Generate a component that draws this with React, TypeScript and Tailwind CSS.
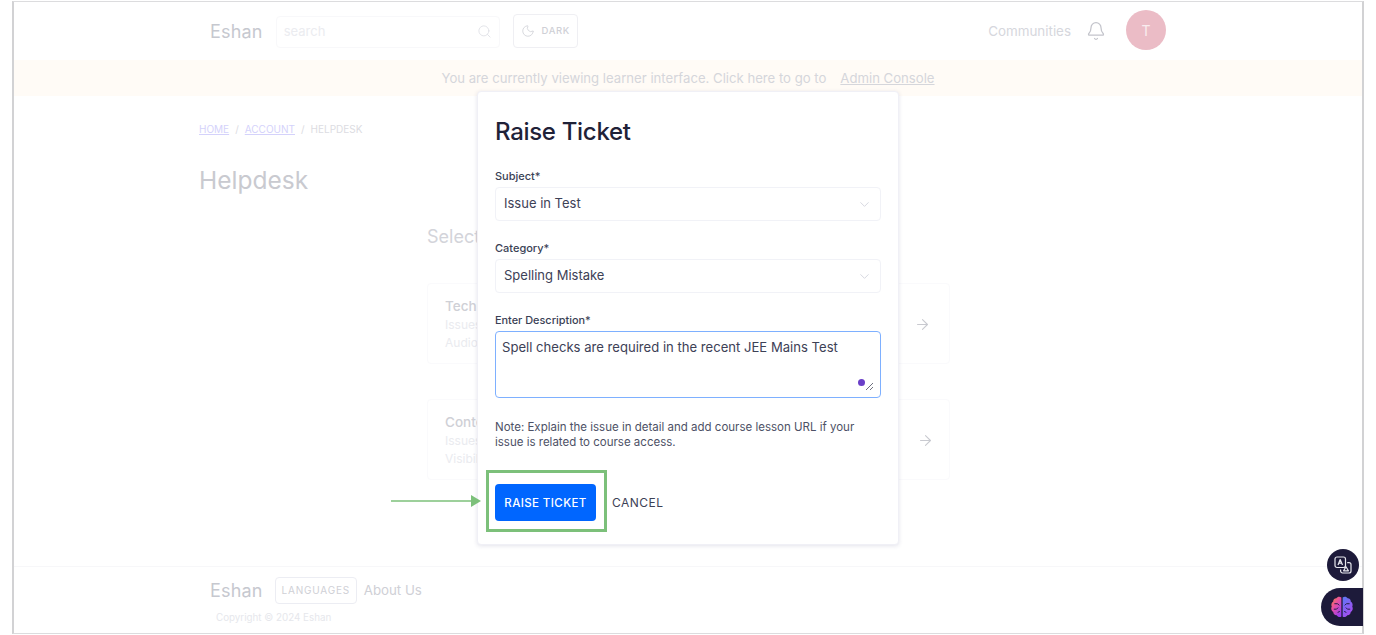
import { ArrowRight, Bell, ChevronDown, Moon, Search } from "lucide-react";

function Logo({ className }: { className?: string }) {
  return <span className={`text-[18px] leading-none text-[#c6c8cf] tracking-[0.2px] ${className ?? ""}`}>Eshan</span>;
}

function TopicCard({ title, line1, line2, arrowClass }: { title: string; line1: string; line2: string; arrowClass: string }) {
  return (
    <div className="h-[81px] w-[523px] rounded border border-[#fafafc] pl-[17px] pt-[14px] flex justify-between">
      <div>
        <div className="text-[13.5px] leading-[17px] font-medium text-[#cfd0d6]">{title}</div>
        <div className="text-[12px] leading-[18px] mt-[1px] text-[#eaebef]">{line1}</div>
        <div className="text-[12px] leading-[18px] text-[#eaebef]">{line2}</div>
      </div>
      <ArrowRight className={arrowClass} size={17} strokeWidth={1.5} color="#c9cad0" />
    </div>
  );
}

function SelectField({ label, value, fieldClass }: { label: string; value: string; fieldClass: string }) {
  return (
    <div className={fieldClass}>
      <div className="text-[11px] leading-[14px] font-medium text-[#3a3f55]">{label}</div>
      <div className="mt-[4px] h-[34px] rounded border border-[#f1f2f7] flex items-center justify-between pl-[8px] pr-[8px]">
        <span className="text-[13px] text-[#3d4156]">{value}</span>
        <ChevronDown size={15} strokeWidth={1.5} color="#d3d5de" />
      </div>
    </div>
  );
}

function TranslateIcon() {
  return (
    <svg width="20" height="20" viewBox="0 0 20 20" fill="none" stroke="#e8e8ee" strokeWidth="1.2" strokeLinejoin="round">
      <rect x="2" y="2" width="10.5" height="10.5" rx="2" />
      <path d="M5 10l2.2-5.5L9.5 10M5.9 8.2h2.7" />
      <path d="M14.2 7.6h1.8a2 2 0 0 1 2 2V16a2 2 0 0 1-2 2H9.6a2 2 0 0 1-2-2v-1.6" />
      <path d="M10.6 15.8l2.4-4 2.4 4z" />
    </svg>
  );
}

function BrainIcon() {
  return (
    <svg width="24" height="24" viewBox="0 0 22 22" fill="none">
      <defs>
        <linearGradient id="brainL" x1="0" y1="0" x2="0.7" y2="1">
          <stop offset="0" stopColor="#f58a3c" />
          <stop offset="0.45" stopColor="#e84fa0" />
          <stop offset="1" stopColor="#9a3df0" />
        </linearGradient>
        <linearGradient id="brainR" x1="0" y1="0" x2="0.6" y2="1">
          <stop offset="0" stopColor="#5a7bf5" />
          <stop offset="1" stopColor="#a84bf0" />
        </linearGradient>
      </defs>
      <path d="M10.4 2.2C8.8 1 6.6 1.5 5.8 3 4 3 2.8 4.4 3 6 1.4 7 .8 9 1.6 10.6.6 12.4 1.2 14.6 3 15.6c0 1.8 1.4 3.2 3.2 3 .8 1.6 3 2.2 4.2 1z" fill="url(#brainL)" />
      <path d="M11.6 2.2c1.6-1.2 3.8-.7 4.6.8 1.8 0 3 1.4 2.8 3 1.6 1 2.2 3 1.4 4.6 1 1.8.4 4-1.4 5 0 1.8-1.4 3.2-3.2 3-.8 1.6-3 2.2-4.2 1z" fill="url(#brainR)" />
      <path d="M4 8h3l1.500 1.500M3.500 13H6l1.500-1.500M7 16l2-1M18 8h-3l-1.500 1.500M18.500 13H16l-1.500-1.500M15 16l-2-1" stroke="#241f47" strokeWidth="0.9" />
    </svg>
  );
}

export default function App() {
  return (
    <div className="relative w-[1376px] h-[635px] overflow-hidden bg-white font-['Inter','Noto_Sans',sans-serif]">
      <div className="ml-[12px] mt-[1px] w-[1352px] h-[633px] border-x-2 border-y border-x-[#d2d2d4] border-y-[#dcdcde] flex flex-col">
        <header className="h-[58px] shrink-0 flex items-center pl-[196px] pr-[196px] pb-[2px]">
          <Logo className="mt-[4px]" />
          <div className="ml-[13px] mt-[3px] w-[224px] h-[32px] rounded border border-[#f8f8fa] flex items-center justify-between pl-[7px] pr-[7px]">
            <span className="text-[13px] text-[#ebecf0]">search</span>
            <Search size={15} strokeWidth={1.4} color="#dfe0e6" />
          </div>
          <div className="ml-[13px] mt-[2px] w-[65px] h-[34px] rounded border border-[#efeff3] flex items-center justify-center gap-[7px]">
            <Moon size={14} strokeWidth={1.4} color="#cfd0d6" />
            <span className="text-[9.5px] font-medium tracking-[0.6px] text-[#cfd0d6]">DARK</span>
          </div>
          <span className="ml-auto mt-[2px] text-[13.4px] text-[#d6d7dd]">Communities</span>
          <Bell className="ml-[15px] mt-[2px]" size={20} strokeWidth={1.5} color="#c3c4cb" />
          <div className="ml-[20px] w-[40px] h-[40px] rounded-full bg-[#ebbcc6] flex items-center justify-center text-[14px] text-[#f9ecef]">T</div>
        </header>

        <div className="h-[36px] shrink-0 bg-[#fffbf6] pt-[2px] flex items-center justify-center gap-[14px] text-[13.15px] text-[#d5d6db]">
          <span>You are currently viewing learner interface. Click here to go to</span>
          <span className="underline">Admin Console</span>
        </div>

        <main className="flex-1 pl-[185px]">
          <div className="pt-[27px] flex gap-[6px] text-[10px] leading-[12px]">
            <span className="underline text-[#d4d2fb]">HOME</span>
            <span className="text-[#dcdce2]">/</span>
            <span className="underline text-[#d4d2fb]">ACCOUNT</span>
            <span className="text-[#dcdce2]">/</span>
            <span className="text-[#dcdce2]">HELPDESK</span>
          </div>
          <h1 className="mt-[29px] text-[24.5px] leading-[32px] text-[#c9cad0]">Helpdesk</h1>
          <div className="ml-[228px] mt-[29px] text-[18px] leading-[24px] text-[#d3d4da]">Select</div>
          <div className="ml-[228px] mt-[34px] flex flex-col gap-[35px]">
            <TopicCard title="Technical" line1="Issues" line2="Audio" arrowClass="mt-[18px] mr-[18px]" />
            <TopicCard title="Content" line1="Issues" line2="Visibility" arrowClass="mt-[18px] mr-[15px]" />
          </div>
        </main>

        <footer className="h-[67px] shrink-0 border-t border-[#f7f7f9] pl-[196px] pt-[10px]">
          <div className="flex items-center">
            <Logo />
            <div className="ml-[12px] w-[82px] h-[27px] rounded border border-[#ecedf3] flex items-center justify-center text-[10px] tracking-[0.8px] text-[#cfd0d6]">LANGUAGES</div>
            <span className="ml-[7px] text-[13.3px] text-[#cfd0d6]">About Us</span>
          </div>
          <div className="ml-[6px] mt-[7px] text-[9.8px] text-[#e6e7ec]">Copyright © 2024 Eshan</div>
        </footer>
      </div>

      <div className="absolute left-[477px] top-[91px] w-[422px] h-[454px] bg-white rounded border border-[#f0f0f6] shadow-[0_1px_4px_rgba(60,60,110,0.14)] px-[17px]">
        <h2 className="mt-[23px] text-[24px] leading-[34px] font-medium tracking-[-0.3px] text-[#1f2238]">Raise Ticket</h2>
        <SelectField label="Subject*" value="Issue in Test" fieldClass="mt-[20px]" />
        <SelectField label="Category*" value="Spelling Mistake" fieldClass="mt-[20px]" />
        <div className="mt-[20px] text-[10.9px] leading-[14px] font-medium text-[#3a3f55]">Enter Description*</div>
        <div className="relative mt-[4px] h-[67px] rounded border border-[#7eb0ff] pl-[6px] pt-[5px] text-[13.1px] leading-[20px] text-[#3d4156]">
          Spell checks are required in the recent JEE Mains Test
          <span className="absolute right-[15px] bottom-[11px] w-[7px] h-[7px] rounded-full bg-[#6a3fc8]"></span>
          <svg className="absolute right-[6px] bottom-[6px]" width="9" height="9" viewBox="0 0 9 9" stroke="#6f7180" strokeWidth="1">
            <path d="M1 8l7-7M5 8l3-3" />
          </svg>
        </div>
        <p className="mt-[22px] text-[11.5px] leading-[15px] text-[#4d5166]">
          Note: Explain the issue in detail and add course lesson URL if your<br />issue is related to course access.
        </p>
        <div className="mt-[34px] flex items-center gap-[16px]">
          <div className="w-[101px] h-[37px] pt-[2px] rounded bg-[#0066ff] flex items-center justify-center text-[11.5px] font-medium tracking-[0.4px] text-white">RAISE TICKET</div>
          <span className="text-[12px] tracking-[0.5px] text-[#3d4156]">CANCEL</span>
        </div>
      </div>

      <div className="absolute left-[486px] top-[470px] w-[121px] h-[62px] border-[3px] border-[#7cc07a]"></div>
      <svg className="absolute left-[390px] top-[494px]" width="92" height="14" viewBox="0 0 92 14">
        <path d="M1 7h82" stroke="#7cc07a" strokeWidth="1.6" />
        <path d="M81 1l10 6-10 6z" fill="#7cc07a" />
      </svg>

      <div className="absolute left-[1327px] top-[549px] w-[32px] h-[32px] rounded-full bg-[#1d1a3a] flex items-center justify-center">
        <TranslateIcon />
      </div>
      <div className="absolute left-[1321px] top-[588px] w-[42px] h-[38px] rounded-l-[19px] bg-[#1d1a3a] flex items-center justify-center">
        <BrainIcon />
      </div>
    </div>
  );
}
